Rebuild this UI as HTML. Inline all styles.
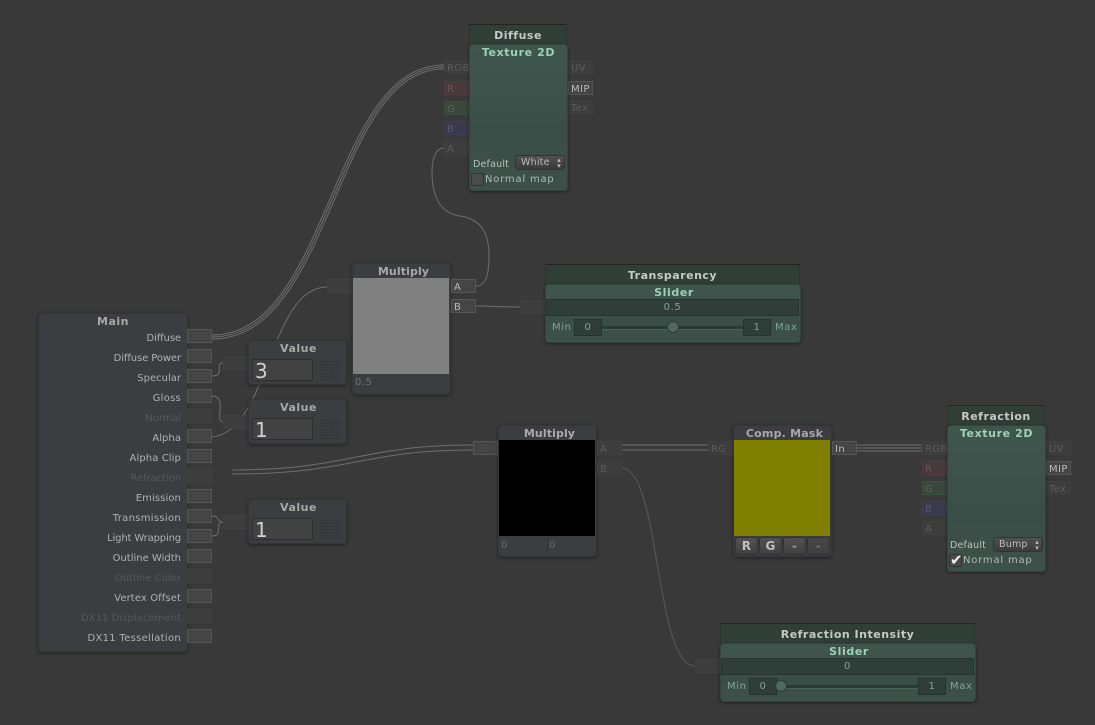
<!DOCTYPE html>
<html><head><meta charset="utf-8">
<style>
html,body{margin:0;padding:0;background:#393939;}
#c{position:relative;width:1095px;height:725px;overflow:hidden;background:#393939;font-family:"DejaVu Sans","Liberation Sans",sans-serif;font-size:10px;color:#b4b4b4;letter-spacing:.2px;}
#c div{position:absolute;box-sizing:border-box;white-space:nowrap;}
svg{position:absolute;left:0;top:0;}
.node{background:#3c3d41;border:1px solid #343539;border-radius:4px;box-shadow:0 1px 3px rgba(0,0,0,.4);}
.t{font-weight:bold;font-size:11px;color:#a8a8a8;text-align:center;letter-spacing:.5px;line-height:14px;margin-top:1px;}
.l{right:914px;text-align:right;color:#b0b0b0;line-height:14px;margin-top:2px;}
.d{color:#585858;}
.p{width:25px;height:14px;border:1px solid #555;background:#454545;color:#bbb;font-size:10px;line-height:15px;padding-left:2px;letter-spacing:.4px;}
.g{width:25px;height:14px;border:1px solid #404040;background:#3d3d3d;color:#5c5c5c;font-size:10px;line-height:15px;padding-left:2px;letter-spacing:.4px;}
.r{border-color:#523d3d;background:#483a3a;color:#6d5454;}
.gr{border-color:#3d4f3d;background:#3a473a;color:#566a56;}
.b{border-color:#3f3f55;background:#3a3a4c;color:#56566f;}
.tt{background:#303e38;border:1px solid #2a3531;border-top-color:#1e2522;color:#c8c8c8;font-weight:bold;font-size:11px;text-align:center;letter-spacing:.5px;}
.gn{background:linear-gradient(#3f564e,#3a4e47 60%,#3c5149);border:1px solid #33433d;border-radius:4px;box-shadow:0 1px 3px rgba(0,0,0,.45);}
.gt{font-weight:bold;font-size:11px;color:#9fd0b8;text-align:center;letter-spacing:.6px;line-height:14px;margin-top:1px;}
.val{font-size:20px;color:#cfcfcf;line-height:23px;padding-left:2px;background:#424242;border:1px solid #2e2e2e;}
.dots{width:20px;height:21px;background-image:radial-gradient(circle,#303134 .7px,transparent .9px);background-size:3px 3px;}
.fld{background:#2f3e38;border:1px solid #26322d;color:#82a294;text-align:center;line-height:16px;letter-spacing:.6px;}
.gl{color:#82a294;line-height:14px;letter-spacing:.6px;margin-top:1px;}
.pop{width:50px;height:15px;background:linear-gradient(#505050,#3c3c3c);border:1px solid #333;border-radius:3px;color:#bbb;font-size:9.5px;line-height:13px;padding-left:5px;}
.chk{width:13px;height:13px;background:#4b4b4b;border:1px solid #333;border-radius:2px;color:#eee;font-size:15px;line-height:11px;text-align:center;}
.btn{width:23px;height:18px;background:linear-gradient(#525252,#404040);border:1px solid #333;border-radius:3px;text-align:center;font-weight:bold;font-size:12px;line-height:17px;color:#c0c0c0;}
.knob{width:12px;height:12px;border-radius:50%;background:#4f6860;border:1px solid #2e3c37;}
.track{width:141px;height:3px;background:#2b3833;border-radius:2px;box-shadow:0 1px 0 #4a6158;}
</style></head><body>
<div id="c">
<svg width="1095" height="725" fill="none" stroke="#6e6e6e" stroke-width="1">
<path d="M212 335C330 335 330 65 444 65"/><path d="M212 337C332 337 332 67 444 67"/><path d="M212 339C334 339 334 69 444 69"/>
<path d="M444 148C436 148 432 158 432 172C432 196 440 213 460 216C480 219 489 232 489 255C489 275 486 286 476 286"/>
<path d="M212 437C269 432 269 287 327 287"/>
<path d="M476 306C490 306 505 307 520 307"/>
<path d="M212 376C226 376 214 363 223 363"/>
<path d="M212 396C228 396 214 422 223 422"/>
<path d="M212 516C220 516 216 522 223 522M212 536C224 536 214 522 223 522"/>
<path d="M232 470C350 470 360 445 473 445"/><path d="M232 474C352 474 362 450 473 450"/>
<path d="M622 445H708M622 450H708"/>
<path d="M857 445H922M857 448H922M857 451H922"/>
<path d="M622 468C660 468 655 666 695 666" stroke="#5a5a5a"/>
</svg>

<!-- Main -->
<div class="node" style="left:38px;top:313px;width:150px;height:339px;"></div>
<div class="t" style="left:38px;top:314px;width:150px;">Main</div>
<div class="l" style="top:330px;letter-spacing:-.1px;">Diffuse</div><div class="p" style="left:187px;top:329px;"></div>
<div class="l" style="top:350px;letter-spacing:-.1px;">Diffuse Power</div><div class="p" style="left:187px;top:349px;"></div>
<div class="l" style="top:370px;letter-spacing:0;">Specular</div><div class="p" style="left:187px;top:369px;"></div>
<div class="l" style="top:390px;letter-spacing:.25px;">Gloss</div><div class="p" style="left:187px;top:389px;"></div>
<div class="l d" style="top:410px;letter-spacing:-.1px;">Normal</div><div class="g" style="left:187px;top:409px;"></div>
<div class="l" style="top:430px;letter-spacing:.05px;">Alpha</div><div class="p" style="left:187px;top:429px;"></div>
<div class="l" style="top:450px;letter-spacing:.1px;">Alpha Clip</div><div class="p" style="left:187px;top:449px;"></div>
<div class="l d" style="top:470px;letter-spacing:-.05px;">Refraction</div><div class="g" style="left:187px;top:469px;"></div>
<div class="l" style="top:490px;letter-spacing:.1px;">Emission</div><div class="p" style="left:187px;top:489px;"></div>
<div class="l" style="top:510px;letter-spacing:.3px;">Transmission</div><div class="p" style="left:187px;top:509px;"></div>
<div class="l" style="top:530px;letter-spacing:-.15px;">Light Wrapping</div><div class="p" style="left:187px;top:529px;"></div>
<div class="l" style="top:550px;letter-spacing:0;">Outline Width</div><div class="p" style="left:187px;top:549px;"></div>
<div class="l d" style="top:570px;letter-spacing:.05px;">Outline Color</div><div class="g" style="left:187px;top:569px;"></div>
<div class="l" style="top:590px;letter-spacing:.1px;">Vertex Offset</div><div class="p" style="left:187px;top:589px;"></div>
<div class="l d" style="top:610px;letter-spacing:.05px;">DX11 Displacement</div><div class="g" style="left:187px;top:609px;"></div>
<div class="l" style="top:630px;letter-spacing:.3px;">DX11 Tessellation</div><div class="p" style="left:187px;top:629px;"></div>

<!-- Value nodes -->
<div class="g" style="left:223px;top:356px;"></div>
<div class="node" style="left:248px;top:340px;width:99px;height:45px;"></div>
<div class="t" style="left:249px;top:341px;width:99px;">Value</div>
<div class="val" style="left:252px;top:359px;width:61px;height:22px;">3</div><div class="dots" style="left:320px;top:360px;"></div>

<div class="g" style="left:223px;top:415px;"></div>
<div class="node" style="left:248px;top:399px;width:99px;height:45px;"></div>
<div class="t" style="left:249px;top:400px;width:99px;">Value</div>
<div class="val" style="left:252px;top:418px;width:61px;height:22px;">1</div><div class="dots" style="left:320px;top:419px;"></div>

<div class="g" style="left:223px;top:515px;"></div>
<div class="node" style="left:248px;top:499px;width:99px;height:45px;"></div>
<div class="t" style="left:249px;top:500px;width:99px;">Value</div>
<div class="val" style="left:252px;top:518px;width:61px;height:22px;">1</div><div class="dots" style="left:320px;top:519px;"></div>

<!-- Diffuse texture -->
<div class="tt" style="left:469px;top:24px;width:98px;height:22px;line-height:21px;">Diffuse</div>
<div class="g" style="left:444px;top:60px;">RGB</div>
<div class="g r" style="left:444px;top:81px;">R</div>
<div class="g gr" style="left:444px;top:101px;">G</div>
<div class="g b" style="left:444px;top:121px;">B</div>
<div class="g" style="left:444px;top:141px;">A</div>
<div class="g" style="left:568px;top:60px;">UV</div>
<div class="p" style="left:568px;top:81px;">MIP</div>
<div class="g" style="left:568px;top:100px;">Tex</div>
<div class="gn" style="left:469px;top:44px;width:99px;height:147px;"></div>
<div class="gt" style="left:469px;top:45px;width:99px;">Texture 2D</div>
<div style="left:473px;top:158px;color:#b8c4be;font-size:9.5px;line-height:13px;">Default</div>
<div class="pop" style="left:515px;top:155px;">White<span style="position:absolute;right:3px;top:1px;font-size:7px;line-height:6px;">▴<br>▾</span></div>
<div class="chk" style="left:471px;top:173px;"></div>
<div style="left:485px;top:173px;color:#aebcb5;line-height:14px;letter-spacing:.8px;">Normal map</div>

<!-- Multiply 1 -->
<div class="g" style="left:327px;top:279px;"></div>
<div class="node" style="left:352px;top:263px;width:99px;height:132px;"></div>
<div class="t" style="left:354px;top:264px;width:99px;letter-spacing:.1px;">Multiply</div>
<div style="left:353px;top:278px;width:96px;height:96px;background:#808080;"></div>
<div style="left:355px;top:376px;color:#6f6f6f;line-height:14px;letter-spacing:.5px;">0.5</div>
<div class="p" style="left:451px;top:279px;">A</div>
<div class="p" style="left:451px;top:299px;">B</div>

<!-- Transparency -->
<div class="g" style="left:520px;top:300px;"></div>
<div class="tt" style="left:545px;top:264px;width:255px;height:22px;line-height:21px;">Transparency</div>
<div class="gn" style="left:545px;top:284px;width:256px;height:59px;"></div>
<div class="gt" style="left:546px;top:285px;width:256px;">Slider</div>
<div class="fld" style="left:546px;top:299px;width:253px;height:17px;">0.5</div>
<div class="gl" style="left:552px;top:320px;">Min</div>
<div class="fld" style="left:574px;top:319px;width:28px;height:17px;">0</div>
<div class="track" style="left:602px;top:326px;"></div>
<div class="knob" style="left:667px;top:321px;"></div>
<div class="fld" style="left:743px;top:319px;width:28px;height:17px;">1</div>
<div class="gl" style="left:775px;top:320px;">Max</div>

<!-- Multiply 2 -->
<div class="p" style="left:473px;top:441px;"></div>
<div class="node" style="left:498px;top:425px;width:99px;height:132px;"></div>
<div class="t" style="left:500px;top:426px;width:99px;letter-spacing:.1px;">Multiply</div>
<div style="left:499px;top:440px;width:96px;height:96px;background:#000;"></div>
<div style="left:501px;top:539px;color:#6a6a6a;line-height:14px;">0</div>
<div style="left:549px;top:539px;color:#6a6a6a;line-height:14px;">0</div>
<div style="left:547px;top:537px;width:1px;height:18px;background:#343537;"></div>
<div class="g" style="left:597px;top:441px;">A</div>
<div class="g" style="left:597px;top:461px;">B</div>

<!-- Comp. Mask -->
<div class="g" style="left:708px;top:441px;">RG</div>
<div class="node" style="left:733px;top:425px;width:99px;height:132px;"></div>
<div class="t" style="left:735px;top:426px;width:99px;letter-spacing:.2px;">Comp. Mask</div>
<div style="left:734px;top:440px;width:96px;height:96px;background:#808000;"></div>
<div class="btn" style="left:735px;top:537px;">R</div>
<div class="btn" style="left:759px;top:537px;">G</div>
<div class="btn" style="left:783px;top:537px;color:#999;">-</div>
<div class="btn" style="left:807px;top:537px;color:#6d6d6d;background:linear-gradient(#484848,#3e3e3e);">-</div>
<div class="p" style="left:832px;top:441px;">In</div>

<!-- Refraction texture -->
<div class="tt" style="left:947px;top:405px;width:98px;height:22px;line-height:21px;">Refraction</div>
<div class="g" style="left:922px;top:441px;">RGB</div>
<div class="g r" style="left:922px;top:461px;">R</div>
<div class="g gr" style="left:922px;top:481px;">G</div>
<div class="g b" style="left:922px;top:501px;">B</div>
<div class="g" style="left:922px;top:521px;">A</div>
<div class="g" style="left:1046px;top:441px;">UV</div>
<div class="p" style="left:1046px;top:461px;">MIP</div>
<div class="g" style="left:1046px;top:481px;">Tex</div>
<div class="gn" style="left:947px;top:425px;width:99px;height:147px;"></div>
<div class="gt" style="left:947px;top:426px;width:99px;">Texture 2D</div>
<div style="left:950px;top:539px;color:#b8c4be;font-size:9.5px;line-height:13px;">Default</div>
<div class="pop" style="left:993px;top:537px;">Bump<span style="position:absolute;right:3px;top:1px;font-size:7px;line-height:6px;">▴<br>▾</span></div>
<div class="chk" style="left:949px;top:554px;">✔</div>
<div style="left:963px;top:554px;color:#aebcb5;line-height:14px;letter-spacing:.8px;">Normal map</div>

<!-- Refraction Intensity -->
<div class="g" style="left:695px;top:659px;"></div>
<div class="tt" style="left:720px;top:623px;width:255px;height:22px;line-height:21px;">Refraction Intensity</div>
<div class="gn" style="left:720px;top:643px;width:256px;height:59px;"></div>
<div class="gt" style="left:721px;top:644px;width:256px;">Slider</div>
<div class="fld" style="left:721px;top:658px;width:253px;height:17px;">0</div>
<div class="gl" style="left:727px;top:679px;">Min</div>
<div class="fld" style="left:749px;top:678px;width:28px;height:17px;">0</div>
<div class="track" style="left:777px;top:685px;"></div>
<div class="knob" style="left:775px;top:680px;"></div>
<div class="fld" style="left:918px;top:678px;width:28px;height:17px;">1</div>
<div class="gl" style="left:950px;top:679px;">Max</div>
</div>
</body></html>
